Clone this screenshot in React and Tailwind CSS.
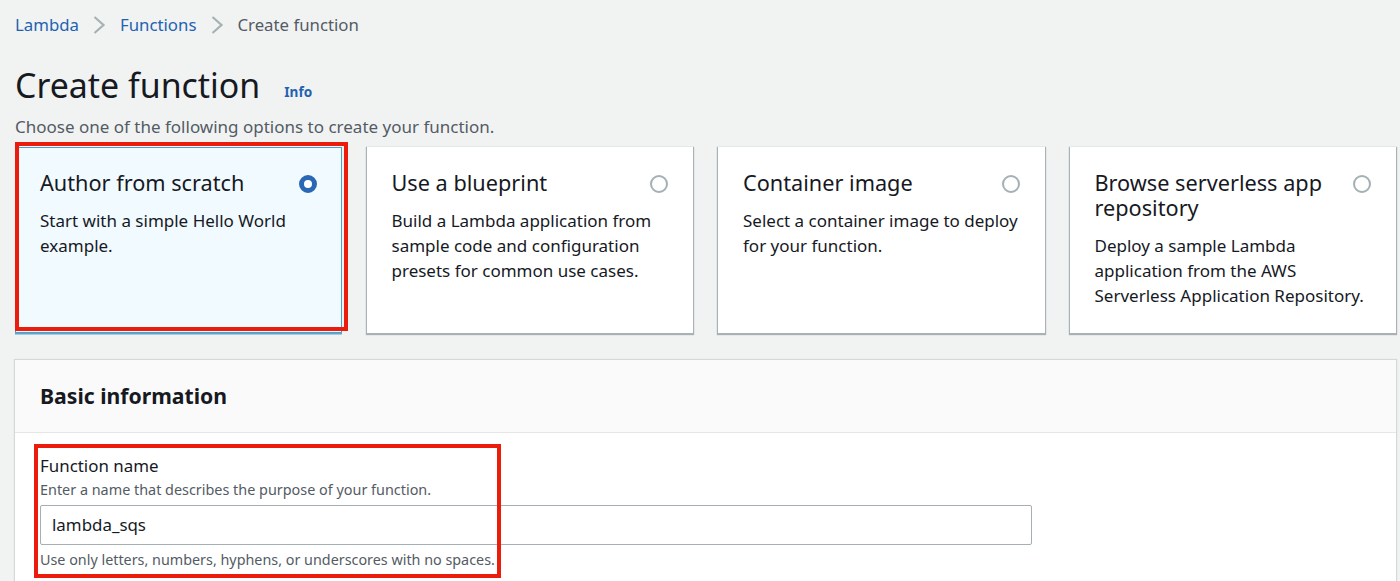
function Radio({ on }) {
  return on ? (
    <span className="mt-[5px] h-[18px] w-[18px] shrink-0 rounded-full border-[5px] border-[#2a67b5] bg-white" />
  ) : (
    <span className="mt-[5px] h-[18px] w-[18px] shrink-0 rounded-full border-2 border-[#a3b0b4] bg-white" />
  );
}
function Card({ title, desc, on }) {
  return (
    <div className={`relative flex h-[186px] w-[326.5px] justify-between pl-[25px] pr-[25px] pt-[23px] ${on ? "bg-[#f1faff] shadow-[inset_0_0_0_1px_#4f9fc8,0_1.5px_0_0_#5fa6cc]" : "bg-white shadow-[0_1px_1px_1px_rgba(0,28,36,0.3)]"}`}>
      {on && <div className="pointer-events-none absolute -top-[5px] left-0 h-[188.5px] w-[332.5px] border-[4.5px] border-[#ec1c0c]" />}
      <div className="w-[250px] whitespace-nowrap">
        <div className="text-[21.7px] leading-[25px] text-[#16191f]">{title}</div>
        <div className="mt-[13px] text-[17px] leading-[25px] text-[#16191f]">{desc.map((d) => <div key={d}>{d}</div>)}</div>
      </div>
      <Radio on={on} />
    </div>
  );
}
function Chevron() {
  return (
    <svg width="16" height="22" viewBox="0 0 16 22" fill="none" className="mx-[12.5px]">
      <path d="M3.5 3 L12.5 11 L3.5 19" stroke="#a6b1b4" strokeWidth="2.2" />
    </svg>
  );
}
export default function App() {
  return (
    <div className="h-[581px] w-[1400px] overflow-hidden bg-[#f1f3f3] pl-[15px] font-['Noto_Sans',sans-serif]">
      <nav className="mt-[12px] flex h-[25px] items-center text-[16.8px] leading-[25px]">
        <span className="text-[#1f62b0]">Lambda</span>
        <Chevron />
        <span className="text-[#1f62b0]">Functions</span>
        <Chevron />
        <span className="text-[#545b64]">Create function</span>
      </nav>
      <div className="mt-[23px] flex h-[50px] items-center">
        <h1 className="text-[33.9px] leading-[50px] font-normal text-[#16191f]">Create function</h1>
        <span className="ml-[24px] mt-[15px] text-[13.6px] font-bold text-[#1f62b0]">Info</span>
      </div>
      <p className="mt-[5px] text-[17px] leading-[24px] text-[#545b64]">Choose one of the following options to create your function.</p>
      <div className="mt-[8px] flex gap-[25px]">
        <Card on title="Author from scratch" desc={["Start with a simple Hello World", "example."]} />
        <Card title="Use a blueprint" desc={["Build a Lambda application from", "sample code and configuration", "presets for common use cases."]} />
        <Card title="Container image" desc={["Select a container image to deploy", "for your function."]} />
        <Card title={<>Browse serverless app<br />repository</>} desc={["Deploy a sample Lambda", "application from the AWS", "Serverless Application Repository."]} />
      </div>
      <section className="mt-[27px] h-[300px] w-[1381px] bg-white shadow-[0_0_1px_1px_rgba(0,28,36,0.12)]">
        <div className="flex h-[73px] items-center border-b border-[#e4e7e7] bg-[#fafafa] pl-[25px]">
          <h2 className="text-[21.2px] font-bold text-[#16191f]">Basic information</h2>
        </div>
        <div className="relative ml-[25px] mt-[22px]">
          <div className="pointer-events-none absolute -top-[11px] -left-[6.5px] h-[134px] w-[467px] border-[4.5px] border-[#ec1c0c]" />
          <div className="text-[16.9px] leading-[22px] text-[#16191f]">Function name</div>
          <div className="mt-[3px] text-[14.4px] leading-[20px] text-[#545b64]">Enter a name that describes the purpose of your function.</div>
          <div className="mt-[5px] flex h-[40px] w-[992px] items-center rounded-[2px] border border-[#a3b0b4] bg-white pl-[11px] text-[16.9px] text-[#16191f]">lambda_sqs</div>
          <div className="mt-[5px] text-[14.35px] leading-[20px] text-[#545b64]">Use only letters, numbers, hyphens, or underscores with no spaces.</div>
        </div>
      </section>
    </div>
  );
}
